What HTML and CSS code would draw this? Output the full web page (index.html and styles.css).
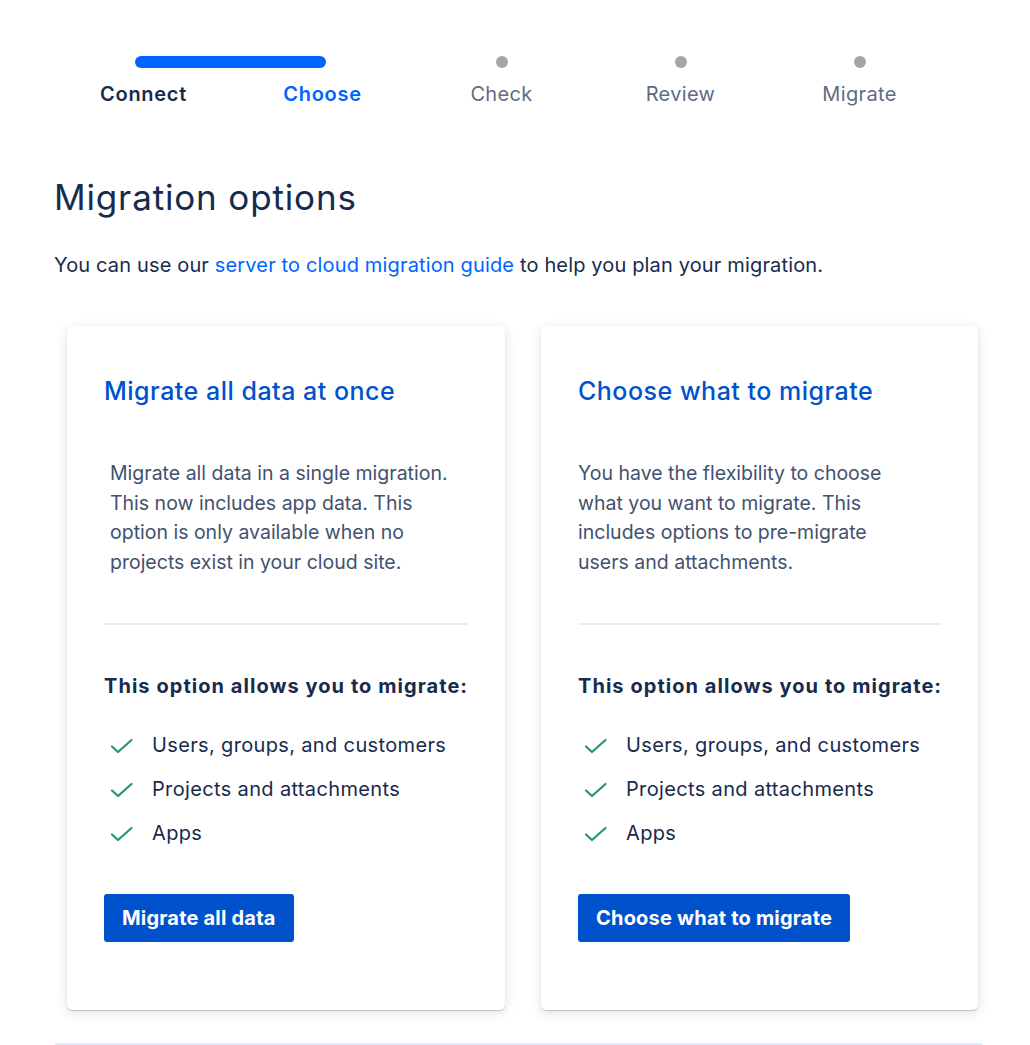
FILE: index.html
```html
<!DOCTYPE html>
<html lang="en">
<head>
<meta charset="utf-8">
<title>Migration options</title>
<link rel="stylesheet" href="styles.css">
</head>
<body>
<div class="page">
  <div class="tracker">
    <div class="track">
      <div class="bar"></div>
      <div class="dot d3"></div>
      <div class="dot d4"></div>
      <div class="dot d5"></div>
    </div>
    <div class="labels">
      <span class="step done">Connect</span>
      <span class="step current">Choose</span>
      <span class="step">Check</span>
      <span class="step">Review</span>
      <span class="step">Migrate</span>
    </div>
  </div>

  <h1 class="title">Migration options</h1>
  <p class="intro">You can use our <a href="#" class="link">server to cloud migration guide</a> to help you plan your migration.</p>

  <div class="cards">
    <div class="card">
      <h2 class="card-title">Migrate all data at once</h2>
      <p class="card-desc indent">Migrate all data in a single migration. This now includes app data. This option is only available when no projects exist in your cloud site.</p>
      <hr class="divider">
      <p class="allows">This option allows you to migrate:</p>
      <ul class="checks">
        <li><svg class="tick" viewBox="0 0 24 16" width="24" height="16"><path d="M2 8.5 L8 14 L21.5 2" fill="none" stroke="currentColor" stroke-width="2.2" stroke-linecap="round" stroke-linejoin="round"/></svg>Users, groups, and customers</li>
        <li><svg class="tick" viewBox="0 0 24 16" width="24" height="16"><path d="M2 8.5 L8 14 L21.5 2" fill="none" stroke="currentColor" stroke-width="2.2" stroke-linecap="round" stroke-linejoin="round"/></svg>Projects and attachments</li>
        <li><svg class="tick" viewBox="0 0 24 16" width="24" height="16"><path d="M2 8.5 L8 14 L21.5 2" fill="none" stroke="currentColor" stroke-width="2.2" stroke-linecap="round" stroke-linejoin="round"/></svg>Apps</li>
      </ul>
      <button class="btn">Migrate all data</button>
    </div>
    <div class="card">
      <h2 class="card-title">Choose what to migrate</h2>
      <p class="card-desc narrow">You have the flexibility to choose what you want to migrate. This includes options to pre-migrate users and attachments.</p>
      <hr class="divider">
      <p class="allows">This option allows you to migrate:</p>
      <ul class="checks">
        <li><svg class="tick" viewBox="0 0 24 16" width="24" height="16"><path d="M2 8.5 L8 14 L21.5 2" fill="none" stroke="currentColor" stroke-width="2.2" stroke-linecap="round" stroke-linejoin="round"/></svg>Users, groups, and customers</li>
        <li><svg class="tick" viewBox="0 0 24 16" width="24" height="16"><path d="M2 8.5 L8 14 L21.5 2" fill="none" stroke="currentColor" stroke-width="2.2" stroke-linecap="round" stroke-linejoin="round"/></svg>Projects and attachments</li>
        <li><svg class="tick" viewBox="0 0 24 16" width="24" height="16"><path d="M2 8.5 L8 14 L21.5 2" fill="none" stroke="currentColor" stroke-width="2.2" stroke-linecap="round" stroke-linejoin="round"/></svg>Apps</li>
      </ul>
      <button class="btn">Choose what to migrate</button>
    </div>
  </div>

  <div class="next-panel"></div>
</div>
</body>
</html>
```

FILE: styles.css
```css
* { box-sizing: border-box; }
html, body { margin: 0; padding: 0; background: #fff; }
body {
  font-family: Inter, "Noto Sans", "Liberation Sans", sans-serif;
  color: #172B4D;
  overflow: hidden;
  height: 1045px;
}
.page {
  padding: 56px 47px 0 54px;
}
.tracker { width: 895px; }
.track {
  display: grid;
  grid-template-columns: repeat(5, 179px);
  height: 12px;
  align-items: center;
}
.bar {
  grid-column: 1 / span 2;
  grid-row: 1;
  margin-left: 81px;
  width: 191px;
  height: 12px;
  border-radius: 6px;
  background: #0065FF;
}
.dot {
  grid-row: 1;
  justify-self: center;
  width: 12px;
  height: 12px;
  border-radius: 50%;
  background: #A5A5A5;
}
.d3 { grid-column: 3; }
.d4 { grid-column: 4; }
.d5 { grid-column: 5; }
.labels {
  display: grid;
  grid-template-columns: repeat(5, 179px);
  margin-top: 13px;
  line-height: 26px;
}
.step {
  text-align: center;
  font-size: 20px;
  color: #5E6C84;
  letter-spacing: 0.35px;
}
.step.done { color: #172B4D; font-weight: 600; letter-spacing: 0.7px; }
.step.current { color: #0065FF; font-weight: 600; letter-spacing: 0.7px; }

.title {
  margin: 68px 0 0;
  font-size: 35px;
  line-height: 44px;
  font-weight: 400;
  color: #172B4D;
  letter-spacing: 0.85px;
}
.intro {
  margin: 33px 0 0;
  font-size: 20px;
  line-height: 26px;
  letter-spacing: 0.15px;
  color: #172B4D;
}
.link { color: #0065FF; text-decoration: none; }

.cards {
  display: grid;
  grid-template-columns: 438px 437px;
  gap: 36px;
  margin: 48px 0 0 13px;
}
.card {
  background: #fff;
  border-radius: 5px;
  box-shadow: 0 1px 1px rgba(9,30,66,0.2), 0 3px 12px rgba(9,30,66,0.13);
  padding: 50px 37px 68px;
}
.card-title {
  margin: 0;
  font-size: 25px;
  line-height: 30px;
  font-weight: 500;
  color: #0052CC;
  letter-spacing: 0.5px;
}
.card-desc {
  margin: 53px 0 0;
  font-size: 19.5px;
  line-height: 29.5px;
  color: #42526E;
}
.card-desc.indent { padding-left: 6px; padding-right: 13px; }
.card-desc.narrow { padding-right: 28px; }
.divider {
  margin: 46px 0 0;
  border: 0;
  height: 2px;
  background: #EBECF0;
}
.allows {
  margin: 47px 0 0;
  font-size: 20px;
  line-height: 29px;
  font-weight: 700;
  letter-spacing: 1.05px;
  color: #172B4D;
  white-space: nowrap;
}
.checks {
  list-style: none;
  margin: 30px 0 0;
  padding: 0;
  display: flex;
  flex-direction: column;
  gap: 15px;
}
.checks li {
  display: flex;
  align-items: center;
  font-size: 20px;
  line-height: 29px;
  letter-spacing: 0.35px;
  color: #172B4D;
}
.tick {
  color: #1F9A63;
  margin: 0 18px 0 6px;
  flex: none;
}
.btn {
  margin-top: 46px;
  height: 48px;
  padding: 0 18px;
  border: 0;
  border-radius: 3px;
  background: #0052CC;
  color: #fff;
  font-family: inherit;
  font-size: 20px;
  font-weight: 700;
  letter-spacing: 0.2px;
  cursor: pointer;
}
.next-panel {
  margin-top: 33px;
  height: 40px;
  border-top: 2px solid #DEEBFF;
  border-radius: 3px 3px 0 0;
  background: #F7FAFF;
}
```
